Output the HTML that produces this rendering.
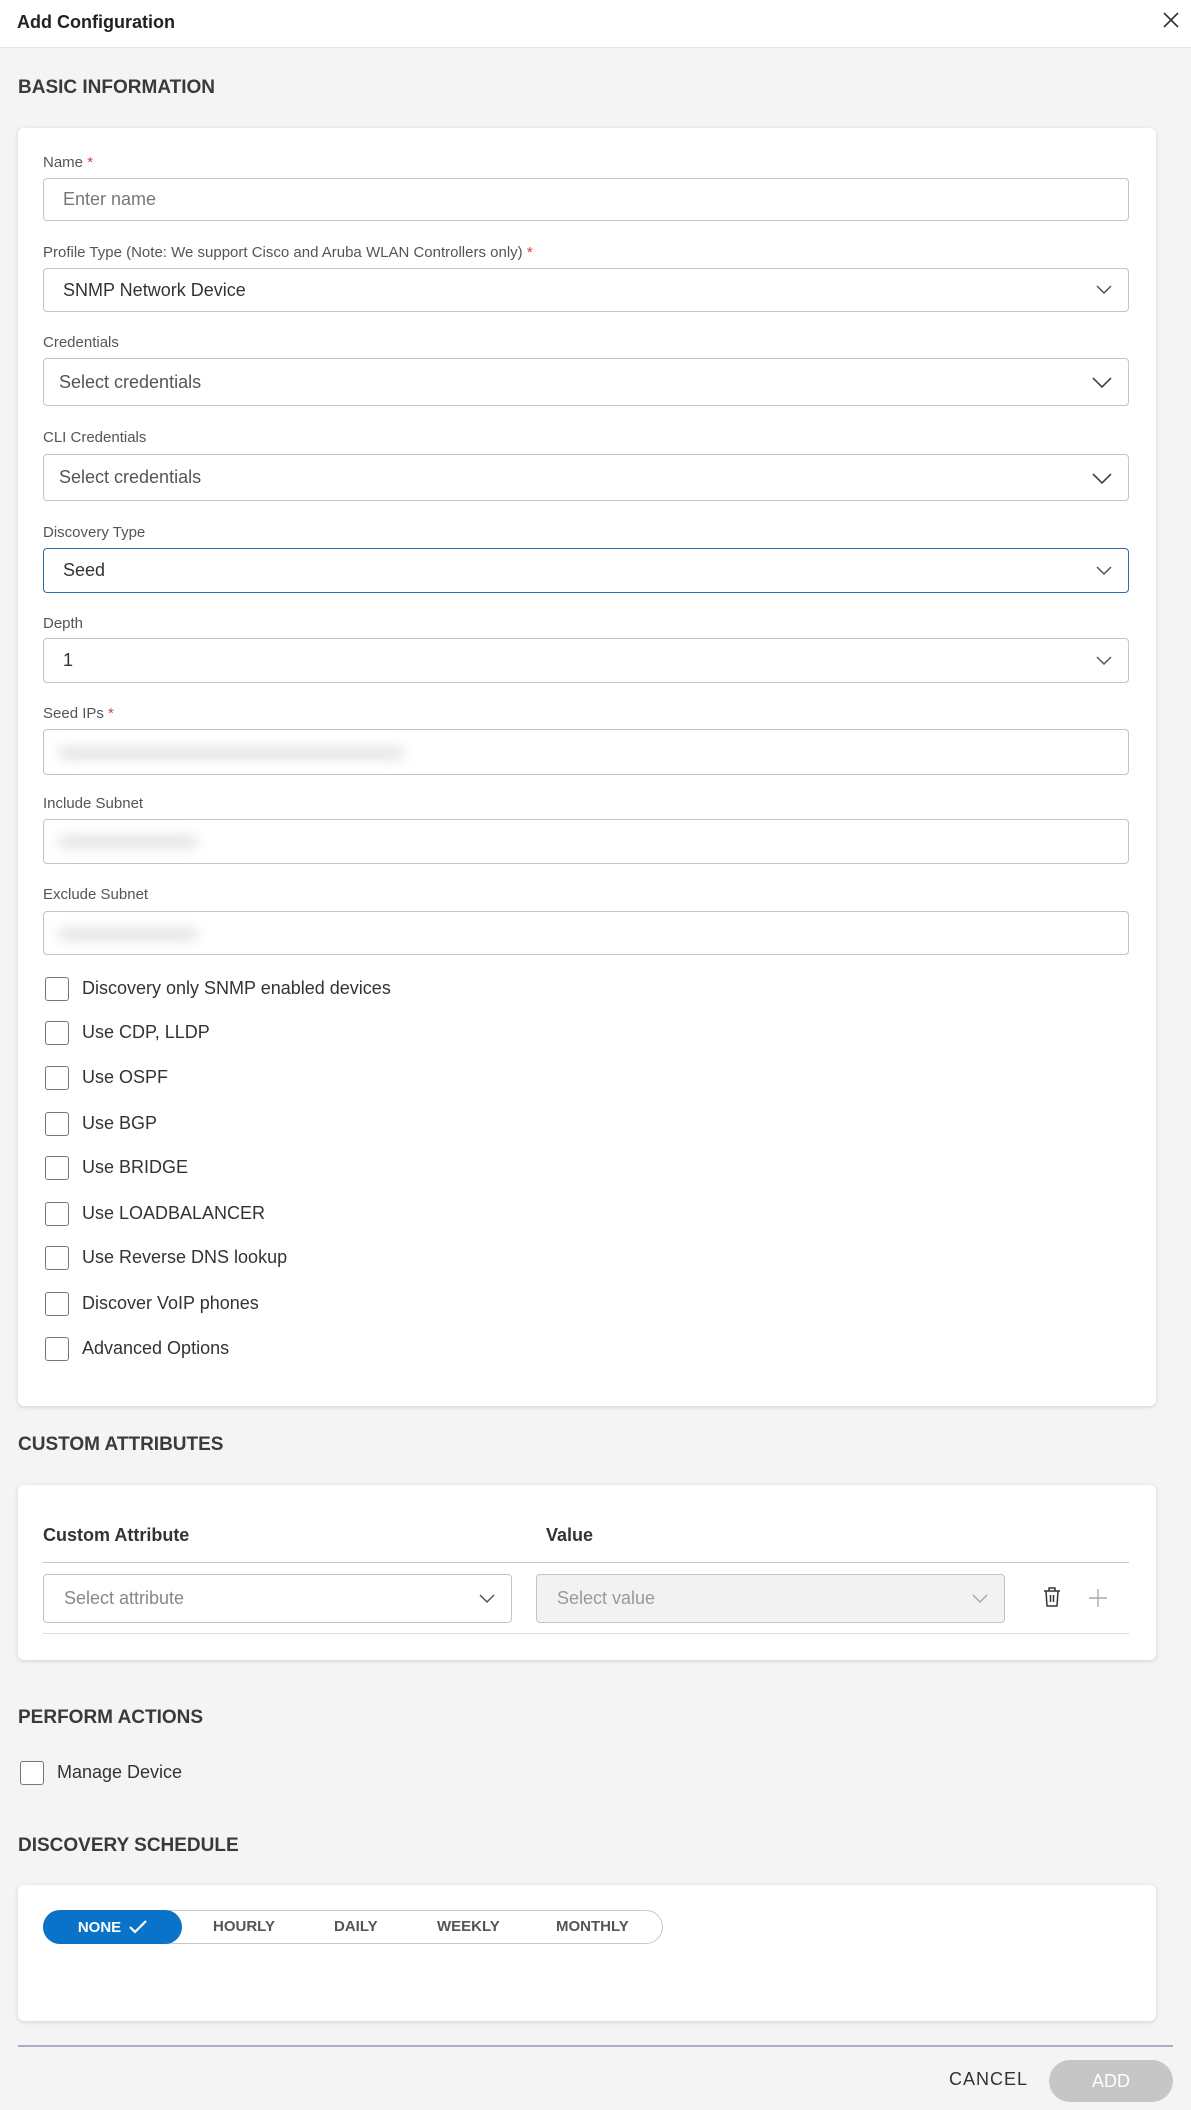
<!DOCTYPE html>
<html><head><meta charset="utf-8"><style>
*{box-sizing:border-box;margin:0;padding:0}
body{width:1191px;height:2110px;background:#f4f4f4;font-family:"Liberation Sans",sans-serif;color:#333;position:relative;overflow:hidden}
.abs{position:absolute}
.hdr{left:0;top:0;width:1191px;height:48px;background:#fff;border-bottom:1px solid #e2e4ea}
.sec{font-size:19px;font-weight:bold;color:#3a3a3a;left:18px}
.card{background:#fff;border-radius:6px;box-shadow:0 1px 4px rgba(0,0,0,.15);left:18px;width:1138px}
.lbl{font-size:15px;color:#555;left:43px}
.lbl b{color:#e03a3a;font-weight:normal}
.inp{left:43px;width:1086px;border:1px solid #c4c4c4;border-radius:4px;background:#fff;font-size:18px;padding-left:19px;display:flex;align-items:center}
.ph{color:#777}
.chev{position:absolute;right:16px;top:50%;margin-top:-5px}
.cb{left:45px;width:24px;height:24px;border:1.5px solid #777;border-radius:3px;background:#fff}
.ct{left:82px;font-size:18px;color:#333}
.blur{position:absolute;background:#e2e2e2;filter:blur(6px);height:12px;border-radius:6px}
</style></head><body>
<div class="abs hdr"></div>
<div class="abs" style="left:17px;top:12px;font-size:18px;font-weight:bold;color:#222">Add Configuration</div>
<svg class="abs" style="left:1162px;top:11px" width="18" height="18" viewBox="0 0 18 18"><path d="M2 2L16 16M16 2L2 16" stroke="#333" stroke-width="1.6"/></svg>

<div class="abs sec" style="top:77px">BASIC INFORMATION</div>
<div class="abs card" style="top:128px;height:1278px"></div>

<div class="abs lbl" style="top:154px">Name <b>*</b></div>
<div class="abs inp" style="top:178px;height:43px"><span class="ph">Enter name</span></div>

<div class="abs lbl" style="top:244px">Profile Type (Note: We support Cisco and Aruba WLAN Controllers only) <b>*</b></div>
<div class="abs inp" style="top:268px;height:44px">SNMP Network Device<svg class="chev" width="16" height="10"><path d="M1 1L8 8L15 1" stroke="#555" fill="none" stroke-width="1.5"/></svg></div>

<div class="abs lbl" style="top:334px">Credentials</div>
<div class="abs inp" style="top:358px;height:48px;padding-left:15px"><span class="ph" style="color:#555">Select credentials</span><svg class="chev" width="20" height="11"><path d="M1 1L10 10L19 1" stroke="#444" fill="none" stroke-width="1.6"/></svg></div>

<div class="abs lbl" style="top:429px">CLI Credentials</div>
<div class="abs inp" style="top:454px;height:47px;padding-left:15px"><span class="ph" style="color:#555">Select credentials</span><svg class="chev" width="20" height="11"><path d="M1 1L10 10L19 1" stroke="#444" fill="none" stroke-width="1.6"/></svg></div>

<div class="abs lbl" style="top:524px">Discovery Type</div>
<div class="abs inp" style="top:548px;height:45px;border-color:#2a6eb0">Seed<svg class="chev" width="16" height="10"><path d="M1 1L8 8L15 1" stroke="#555" fill="none" stroke-width="1.5"/></svg></div>

<div class="abs lbl" style="top:615px">Depth</div>
<div class="abs inp" style="top:638px;height:45px">1<svg class="chev" width="16" height="10"><path d="M1 1L8 8L15 1" stroke="#555" fill="none" stroke-width="1.5"/></svg></div>

<div class="abs lbl" style="top:705px">Seed IPs <b>*</b></div>
<div class="abs inp" style="top:729px;height:46px"><div class="blur" style="left:14px;top:17px;width:346px"></div></div>

<div class="abs lbl" style="top:795px">Include Subnet</div>
<div class="abs inp" style="top:819px;height:45px"><div class="blur" style="left:14px;top:16px;width:140px"></div></div>

<div class="abs lbl" style="top:886px">Exclude Subnet</div>
<div class="abs inp" style="top:911px;height:44px"><div class="blur" style="left:14px;top:16px;width:140px"></div></div>

<div class="abs cb" style="top:977px"></div><div class="abs ct" style="top:978px">Discovery only SNMP enabled devices</div>
<div class="abs cb" style="top:1021px"></div><div class="abs ct" style="top:1022px">Use CDP, LLDP</div>
<div class="abs cb" style="top:1066px"></div><div class="abs ct" style="top:1067px">Use OSPF</div>
<div class="abs cb" style="top:1112px"></div><div class="abs ct" style="top:1113px">Use BGP</div>
<div class="abs cb" style="top:1156px"></div><div class="abs ct" style="top:1157px">Use BRIDGE</div>
<div class="abs cb" style="top:1202px"></div><div class="abs ct" style="top:1203px">Use LOADBALANCER</div>
<div class="abs cb" style="top:1246px"></div><div class="abs ct" style="top:1247px">Use Reverse DNS lookup</div>
<div class="abs cb" style="top:1292px"></div><div class="abs ct" style="top:1293px">Discover VoIP phones</div>
<div class="abs cb" style="top:1337px"></div><div class="abs ct" style="top:1338px">Advanced Options</div>

<div class="abs sec" style="top:1434px">CUSTOM ATTRIBUTES</div>
<div class="abs card" style="top:1485px;height:175px"></div>
<div class="abs" style="left:43px;top:1525px;font-size:18px;font-weight:bold;color:#333">Custom Attribute</div>
<div class="abs" style="left:546px;top:1525px;font-size:18px;font-weight:bold;color:#333">Value</div>
<div class="abs" style="left:43px;top:1562px;width:1086px;height:1px;background:#c8c8c8"></div>
<div class="abs inp" style="top:1574px;height:49px;width:469px;padding-left:20px"><span class="ph" style="color:#888">Select attribute</span><svg class="chev" width="16" height="10"><path d="M1 1L8 8L15 1" stroke="#555" fill="none" stroke-width="1.5"/></svg></div>
<div class="abs inp" style="left:536px;top:1574px;height:49px;width:469px;padding-left:20px;background:#f2f2f2"><span class="ph" style="color:#999">Select value</span><svg class="chev" width="16" height="10"><path d="M1 1L8 8L15 1" stroke="#aaa" fill="none" stroke-width="1.5"/></svg></div>
<svg class="abs" style="left:1043px;top:1586px" width="18" height="22" viewBox="0 0 18 22"><path d="M1 5H17M6 5V2H12V5M3 5L4 20H14L15 5M7.5 9V16M10.5 9V16" stroke="#333" fill="none" stroke-width="1.5"/></svg>
<svg class="abs" style="left:1088px;top:1588px" width="20" height="20"><path d="M10 1V19M1 10H19" stroke="#aaa" stroke-width="1.4"/></svg>
<div class="abs" style="left:43px;top:1633px;width:1086px;height:1px;background:#d8dce4"></div>

<div class="abs sec" style="top:1707px">PERFORM ACTIONS</div>
<div class="abs cb" style="left:20px;top:1761px"></div><div class="abs ct" style="left:57px;top:1762px">Manage Device</div>

<div class="abs sec" style="top:1835px">DISCOVERY SCHEDULE</div>
<div class="abs card" style="top:1885px;height:136px"></div>
<div class="abs" style="left:43px;top:1910px;width:620px;height:34px;border:1px solid #c8c8c8;border-radius:17px;background:#fff"></div>
<div class="abs" style="left:43px;top:1910px;width:139px;height:34px;border-radius:17px;background:#0a72c8;color:#fff;font-size:15px;font-weight:bold;display:flex;align-items:center;justify-content:center;gap:8px">NONE<svg width="18" height="14"><path d="M1 7L6 12L17 1" stroke="#fff" fill="none" stroke-width="2.2"/></svg></div>
<div class="abs" style="left:213px;top:1918px;font-size:15px;font-weight:bold;color:#555">HOURLY</div>
<div class="abs" style="left:334px;top:1918px;font-size:15px;font-weight:bold;color:#555">DAILY</div>
<div class="abs" style="left:437px;top:1918px;font-size:15px;font-weight:bold;color:#555">WEEKLY</div>
<div class="abs" style="left:556px;top:1918px;font-size:15px;font-weight:bold;color:#555">MONTHLY</div>

<div class="abs" style="left:18px;top:2045px;width:1155px;height:2px;background:#a6adc4"></div>
<div class="abs" style="left:949px;top:2069px;font-size:18px;color:#333;letter-spacing:1px">CANCEL</div>
<div class="abs" style="left:1049px;top:2060px;width:124px;height:42px;border-radius:21px;background:#c6c6c6;color:#fff;font-size:18px;display:flex;align-items:center;justify-content:center">ADD</div>
</body></html>
